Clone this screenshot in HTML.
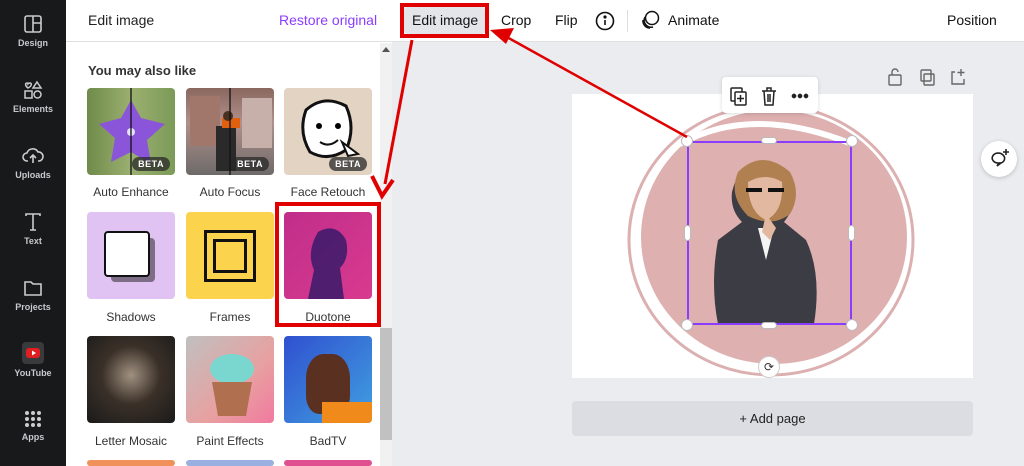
<!DOCTYPE html>
<html><head><style>
*{box-sizing:border-box;margin:0;padding:0}
html{width:1024px;height:466px;overflow:hidden}
body{width:1024px;height:466px;overflow:hidden;font-family:"Liberation Sans",sans-serif;background:#ebecf0;position:relative}
.a{position:absolute}
.side{left:0;top:0;width:66px;height:466px;background:#18191b}
.si{position:absolute;left:0;width:66px;text-align:center;color:#c8c9cc;font-size:9px;font-weight:bold}
.si svg{display:block;margin:0 auto 4px}
.panel{left:66px;top:0;width:326px;height:466px;background:#fff}
.tile{position:absolute;width:88px;height:87px;border-radius:4px;overflow:hidden}
.lbl{position:absolute;width:110px;text-align:center;font-size:12px;color:#333}
.beta{position:absolute;right:5px;bottom:4px;background:rgba(40,40,40,.75);color:#fff;font-size:9px;font-weight:bold;padding:2px 6px;border-radius:8px;letter-spacing:.5px}
.tb{font-size:14px;color:#111;position:absolute;top:12px}
</style></head><body>
<div class="a side">
 <div class="si" style="top:14px"><svg width="20" height="20" viewBox="0 0 20 20" fill="none" stroke="#ccc" stroke-width="1.6"><rect x="2" y="2" width="16" height="16" rx="2"/><path d="M10 2v16M10 9h8"/></svg>Design</div>
 <div class="si" style="top:80px"><svg width="20" height="20" viewBox="0 0 20 20" fill="none" stroke="#ccc" stroke-width="1.5"><path d="M5 8C2 6 2 3 4 3s1 1 1 1 0-1 2-1 2 3-2 5z"/><path d="M14 2l4 6h-8z"/><rect x="2" y="11" width="7" height="7"/><circle cx="14.5" cy="14.5" r="3.5"/></svg>Elements</div>
 <div class="si" style="top:146px"><svg width="22" height="20" viewBox="0 0 22 20" fill="none" stroke="#ccc" stroke-width="1.6"><path d="M6 15H5a4 4 0 010-8 6 6 0 0111-1 4 4 0 011 9h-1M11 17V9M8 12l3-3 3 3"/></svg>Uploads</div>
 <div class="si" style="top:212px"><svg width="20" height="20" viewBox="0 0 20 20" fill="none" stroke="#ccc" stroke-width="1.6"><path d="M3 4V2h14v2M10 2v16M7 18h6"/></svg>Text</div>
 <div class="si" style="top:278px"><svg width="20" height="20" viewBox="0 0 20 20" fill="none" stroke="#ccc" stroke-width="1.6"><path d="M2 4h6l2 2h8v11H2z"/></svg>Projects</div>
 <div class="si" style="top:342px"><svg width="22" height="22" viewBox="0 0 22 22"><rect width="22" height="22" rx="4" fill="#3a3a3c"/><rect x="4" y="6" width="14" height="10" rx="3" fill="#e02020"/><path d="M10 8.5v5l4-2.5z" fill="#fff"/></svg>YouTube</div>
 <div class="si" style="top:410px"><svg width="18" height="18" viewBox="0 0 18 18" fill="#ccc"><circle cx="3" cy="3" r="2"/><circle cx="9" cy="3" r="2"/><circle cx="15" cy="3" r="2"/><circle cx="3" cy="9" r="2"/><circle cx="9" cy="9" r="2"/><circle cx="15" cy="9" r="2"/><circle cx="3" cy="15" r="2"/><circle cx="9" cy="15" r="2"/><circle cx="15" cy="15" r="2"/></svg>Apps</div>
</div>
<div class="a panel">
 <div class="a" style="left:0;top:0;width:326px;height:42px;border-bottom:1px solid #e0e0e0"></div>
 <div class="a" style="left:22px;top:12px;font-size:14px;color:#222">Edit image</div>
 <div class="a" style="left:213px;top:12px;font-size:14px;color:#8b3dff">Restore original</div>
 <div class="a" style="left:314px;top:43px;width:12px;height:423px;background:#f1f1f1"></div>
 <div class="a" style="left:314px;top:328px;width:12px;height:112px;background:#c1c1c1"></div>
 <div class="a" style="left:316px;top:47px;width:0;height:0;border:4px solid transparent;border-bottom:5px solid #555;border-top:0"></div>
 <div class="a" style="left:22px;top:63px;font-size:13px;font-weight:bold;color:#333">You may also like</div>
</div>
<div class="tile" style="left:87px;top:88px;background:linear-gradient(90deg,#6f8a4a,#9bb070 50%,#7c9a58)"><svg width="88" height="87" class="a" style="left:0;top:0"><path d="M44 12 L54 30 L78 36 L60 52 L64 76 L44 64 L24 74 L28 50 L12 36 L34 30Z" fill="#8a55d8"/><circle cx="44" cy="44" r="4" fill="#e8e0ff"/><line x1="44" y1="0" x2="44" y2="87" stroke="#111" stroke-width="1.3"/></svg><span class="beta">BETA</span></div>
<div class="tile" style="left:186px;top:88px;background:linear-gradient(180deg,#8a6860,#b0908a 40%,#6d6a6a)"><svg width="88" height="87" class="a" style="left:0;top:0"><rect x="4" y="8" width="30" height="50" fill="#a0776a"/><rect x="56" y="10" width="30" height="50" fill="#c8b0aa"/><rect x="30" y="38" width="20" height="45" fill="#2a2a2a"/><rect x="36" y="30" width="18" height="10" fill="#e06010"/><circle cx="42" cy="28" r="5" fill="#4a3020"/><line x1="44" y1="0" x2="44" y2="87" stroke="#111" stroke-width="1.3"/></svg><span class="beta">BETA</span></div>
<div class="tile" style="left:284px;top:88px;background:#e3d3c3"><svg width="88" height="87" class="a" style="left:0;top:0"><path d="M22 22 Q40 6 62 18 Q72 40 62 62 Q44 74 26 64 Q14 44 22 22Z" fill="#fff" stroke="#111" stroke-width="3"/><circle cx="35" cy="38" r="3"/><circle cx="54" cy="38" r="3"/><path d="M36 54 Q45 60 54 52" fill="none" stroke="#111" stroke-width="2"/><path d="M58 54 L74 66 L64 68Z" fill="#fff" stroke="#111" stroke-width="2"/></svg><span class="beta">BETA</span></div>
<div class="lbl" style="left:76px;top:185px">Auto Enhance</div>
<div class="lbl" style="left:175px;top:185px">Auto Focus</div>
<div class="lbl" style="left:273px;top:185px">Face Retouch</div>

<div class="tile" style="left:87px;top:212px;background:#e0c3f3"><div class="a" style="left:24px;top:26px;width:44px;height:44px;background:#7e6d87;border-radius:4px"></div><div class="a" style="left:17px;top:19px;width:46px;height:46px;background:#fff;border:2px solid #111;border-radius:4px"></div></div>
<div class="tile" style="left:186px;top:212px;background:#fcd34d"><div class="a" style="left:18px;top:18px;width:52px;height:52px;border:3px solid #111"></div><div class="a" style="left:27px;top:27px;width:34px;height:34px;border:3px solid #111"></div></div>
<div class="tile" style="left:284px;top:212px;background:linear-gradient(135deg,#c02e8a,#d93a8f)"><svg width="88" height="87" class="a"><path d="M34 20 Q52 10 62 28 Q66 46 56 56 L60 87 H24 L30 58 Q22 40 34 20Z" fill="#3a1a6a" opacity=".85"/></svg></div>
<div class="lbl" style="left:76px;top:310px">Shadows</div>
<div class="lbl" style="left:175px;top:310px">Frames</div>
<div class="lbl" style="left:273px;top:310px">Duotone</div>

<div class="tile" style="left:87px;top:336px;background:radial-gradient(circle at 50% 45%,#a09080,#3a3028 45%,#1a1a1a)"></div>
<div class="tile" style="left:186px;top:336px;background:linear-gradient(135deg,#c0c0c0,#e8a0a0 60%,#f07aa0)"><div class="a" style="left:24px;top:18px;width:44px;height:30px;border-radius:50%;background:#7ad7d0"></div><div class="a" style="left:26px;top:46px;width:40px;height:34px;background:#b07050;clip-path:polygon(0 0,100% 0,85% 100%,15% 100%)"></div></div>
<div class="tile" style="left:284px;top:336px;background:linear-gradient(135deg,#3050d0,#40a0e0)"><div class="a" style="left:22px;top:18px;width:44px;height:60px;border-radius:40% 40% 30% 30%;background:#5a3020"></div><div class="a" style="left:38px;top:66px;width:50px;height:21px;background:#f08a1a"></div></div>
<div class="lbl" style="left:76px;top:434px">Letter Mosaic</div>
<div class="lbl" style="left:175px;top:434px">Paint Effects</div>
<div class="lbl" style="left:273px;top:434px">BadTV</div>
<div class="tile" style="left:87px;top:460px;height:6px;background:#f0905a"></div>
<div class="tile" style="left:186px;top:460px;height:6px;background:#9ab0e0"></div>
<div class="tile" style="left:284px;top:460px;height:6px;background:#e05090"></div>

<div class="a" style="left:392px;top:0;width:632px;height:42px;background:#fff;border-bottom:1px solid #e0e0e0"></div>
<div class="a" style="left:404px;top:7px;width:81px;height:27px;background:#e4e5e9;border-radius:3px"></div>
<div class="tb" style="left:412px">Edit image</div>
<div class="tb" style="left:501px">Crop</div>
<div class="tb" style="left:555px">Flip</div>
<svg class="a" style="left:595px;top:11px" width="20" height="20" viewBox="0 0 20 20" fill="none" stroke="#111" stroke-width="1.6"><circle cx="10" cy="10" r="8.5"/><path d="M10 9v5"/><circle cx="10" cy="6" r=".8" fill="#111"/></svg>
<div class="a" style="left:627px;top:10px;width:1px;height:22px;background:#ddd"></div>
<svg class="a" style="left:640px;top:10px" width="20" height="20" viewBox="0 0 20 20" fill="none" stroke="#111" stroke-width="1.5"><circle cx="12" cy="8" r="6.5"/><path d="M5 7a7 7 0 008 10M3 10a7 7 0 007 8"/></svg>
<div class="tb" style="left:668px">Animate</div>
<div class="tb" style="left:947px">Position</div>

<div class="a" style="left:400px;top:3px;width:89px;height:35px;border:4px solid #e00000"></div>
<div class="a" style="left:275px;top:202px;width:106px;height:125px;border:4px solid #e00000"></div>

<svg class="a" style="left:884px;top:66px" width="90" height="22" viewBox="0 0 90 22" fill="none" stroke="#666" stroke-width="1.4"><rect x="5" y="9" width="12" height="10" rx="1"/><path d="M8 9V6a3 3 0 016 0"/><rect x="37" y="4" width="10" height="11" rx="1"/><rect x="40" y="8" width="10" height="11" rx="1"/><path d="M71 6h-3v12h12v-5M77 3v7M73.5 6.5h7"/></svg>
<div class="a" style="left:572px;top:94px;width:401px;height:284px;background:#fff"></div>
<svg class="a" style="left:572px;top:84px" width="401" height="300">
 <ellipse cx="199" cy="156" rx="142" ry="135" fill="none" stroke="#dcb0b0" stroke-width="3"/>
 <ellipse cx="202" cy="153" rx="133" ry="127" fill="#deb0b0"/>
 <path d="M108 60 Q180 20 280 60" fill="none" stroke="#fff" stroke-width="6"/>
 <path d="M190 84 Q168 76 160 108 Q158 126 170 138 L146 156 Q138 200 146 240 H242 Q250 190 234 156 L212 138 Q226 120 222 102 Q212 74 190 84Z" fill="#3c3d44"/>
 <path d="M166 88 Q190 64 218 88 Q230 110 218 130 Q200 144 176 132 Q156 112 166 88Z" fill="#b08050"/>
 <path d="M176 98 Q194 88 210 98 Q212 128 194 136 Q176 128 176 98Z" fill="#e3b8a0"/>
 <path d="M174 106 h16 M196 106 h16" stroke="#111" stroke-width="4"/>
 <path d="M186 144 l8 32 l8 -32z" fill="#f4f4f4"/>
 <path d="M194 130 l10 14 l-6 12 l-8-8z" fill="#e3b8a0"/>
</svg>
<div class="a" style="left:687px;top:141px;width:165px;height:184px;border:2px solid #8b3dff"></div>
<div class="a" style="left:681px;top:135px;width:12px;height:12px;border-radius:50%;background:#fff;border:1px solid #bbb"></div>
<div class="a" style="left:846px;top:135px;width:12px;height:12px;border-radius:50%;background:#fff;border:1px solid #bbb"></div>
<div class="a" style="left:681px;top:319px;width:12px;height:12px;border-radius:50%;background:#fff;border:1px solid #bbb"></div>
<div class="a" style="left:846px;top:319px;width:12px;height:12px;border-radius:50%;background:#fff;border:1px solid #bbb"></div>
<div class="a" style="left:761px;top:137px;width:16px;height:7px;border-radius:4px;background:#fff;border:1px solid #bbb"></div>
<div class="a" style="left:761px;top:322px;width:16px;height:7px;border-radius:4px;background:#fff;border:1px solid #bbb"></div>
<div class="a" style="left:684px;top:225px;width:7px;height:16px;border-radius:4px;background:#fff;border:1px solid #bbb"></div>
<div class="a" style="left:848px;top:225px;width:7px;height:16px;border-radius:4px;background:#fff;border:1px solid #bbb"></div>
<div class="a" style="left:758px;top:356px;width:22px;height:22px;border-radius:50%;background:#fff;border:1px solid #ccc;font-size:12px;text-align:center;line-height:20px;color:#333">⟳</div>
<div class="a" style="left:722px;top:77px;width:96px;height:36px;background:#fff;border-radius:4px;box-shadow:0 1px 4px rgba(0,0,0,.15)"></div>
<svg class="a" style="left:728px;top:85px" width="86" height="22" viewBox="0 0 86 22" fill="none" stroke="#222" stroke-width="1.5"><rect x="3" y="3" width="11" height="13" rx="1"/><rect x="7" y="7" width="11" height="13" rx="1" fill="#fff"/><path d="M12.5 10v7M9 13.5h7"/><path d="M34 6h14M39 6V3h4v3M36 6l1 14h8l1-14M40 9v8M42 9v8"/><circle cx="66" cy="11" r="1.6" fill="#222"/><circle cx="72" cy="11" r="1.6" fill="#222"/><circle cx="78" cy="11" r="1.6" fill="#222"/></svg>
<div class="a" style="left:981px;top:141px;width:36px;height:36px;border-radius:50%;background:#fff;box-shadow:0 1px 4px rgba(0,0,0,.2)"></div>
<svg class="a" style="left:989px;top:147px" width="22" height="22" viewBox="0 0 22 22" fill="none" stroke="#222" stroke-width="1.6"><path d="M14 8a6 5 0 10-4 8l-2 3 4-3a6 5 0 002-8z"/><path d="M17 2v6M14 5h6"/></svg>
<div class="a" style="left:572px;top:401px;width:401px;height:35px;background:#dcdde2;border-radius:4px;text-align:center;line-height:35px;font-size:13px;color:#222">+ Add page</div>

<svg class="a" style="left:0;top:0" width="1024" height="466">
 <line x1="687" y1="137" x2="505" y2="36" stroke="#e00000" stroke-width="2.5"/>
 <path d="M490 30 L514 28 L506 44Z" fill="#e00000"/>
 <line x1="412" y1="40" x2="385" y2="184" stroke="#e00000" stroke-width="3"/>
 <path d="M372 176 L382 196 L393 180" fill="none" stroke="#e00000" stroke-width="4"/>
</svg>
</body></html>
